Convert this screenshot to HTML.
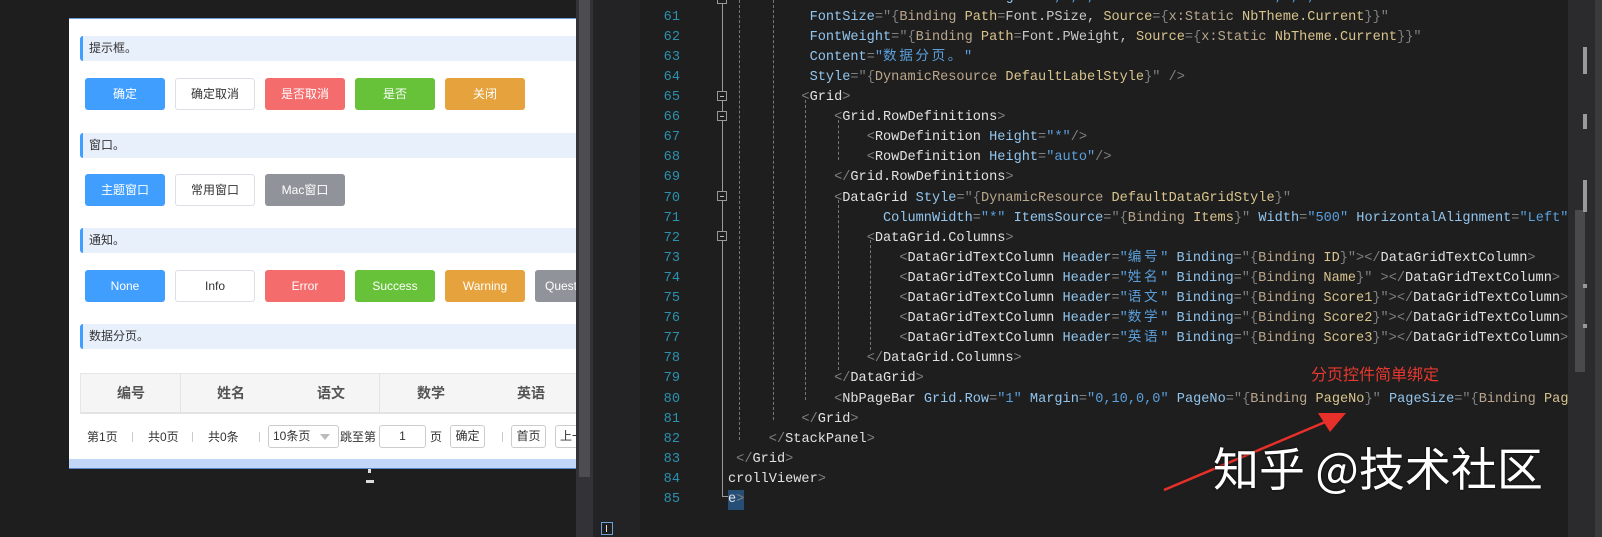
<!DOCTYPE html>
<html><head><meta charset="utf-8"><style>
*{margin:0;padding:0;box-sizing:border-box}
body{width:1602px;height:537px;overflow:hidden;background:#1e1e1e;position:relative;font-family:"Liberation Sans","Noto Sans CJK SC",sans-serif}
.abs{position:absolute}
.win{left:69px;top:18px;width:507px;height:441px;background:#fff;border-top:1px solid #6a9ad8;overflow:hidden}
.hd{position:absolute;left:11px;width:500px;height:25px;background:#e8f0fc;border-left:3px solid #409eff;border-radius:3px 0 0 3px;font-size:12px;color:#333;line-height:25px;padding-left:6px}
.bt{position:absolute;width:80px;height:32px;border-radius:3px;font-size:12px;color:#fff;text-align:center;line-height:32px;white-space:nowrap;overflow:hidden}
.w{background:#fff;border:1px solid #dcdfe6;color:#333;line-height:30px}
.th{position:absolute;top:354px;left:11px;width:500px;height:41px;background:#f5f5f5;border:1px solid #e6e6e6;border-bottom:2px solid #e3e3e3}
.th span{position:absolute;top:0;width:100px;text-align:center;line-height:39px;font-size:14px;color:#555;font-weight:bold}
.pg{position:absolute;top:407px;font-size:12px;color:#333;line-height:22px;white-space:nowrap}
.sep{position:absolute;top:413px;width:1px;height:10px;background:#ccc}
.box{position:absolute;border:1px solid #ccc;border-radius:3px;height:23px;top:406px;font-size:12px;color:#333;line-height:21px;text-align:center;white-space:nowrap;overflow:hidden}
.code{position:absolute;left:0;top:0;width:1568px;height:537px;overflow:hidden;font-family:"Liberation Mono","Noto Sans CJK SC",monospace;font-size:13.6px;white-space:pre;color:#dcdcdc;line-height:20px}
.ln{position:absolute;left:640px;width:40px;text-align:right;color:#2b91af}
.cl{position:absolute;left:728px}
.b{color:#808080}.e{color:#e2e2e2}.a{color:#92c5ee}.s{color:#5a9fdc}.k{color:#b9a68c}.p{color:#d9c48e}.v{color:#c8c8c8}
.cj{letter-spacing:2.6px}
.fold{position:absolute;left:717px;width:10px;height:10px;border:1px solid #999;background:#1e1e1e}
.fold:after{content:"";position:absolute;left:2px;top:4px;width:4px;height:1px;background:#bbb}
.dash{position:absolute;width:0;border-left:1px dashed #777}
</style></head><body>
<div class="abs win">
  <div class="hd" style="top:17px">提示框。</div>
  <div class="bt" style="left:16px;top:59px;background:#409eff">确定</div>
  <div class="bt w" style="left:106px;top:59px">确定取消</div>
  <div class="bt" style="left:196px;top:59px;background:#f56c6c">是否取消</div>
  <div class="bt" style="left:286px;top:59px;background:#67c23a">是否</div>
  <div class="bt" style="left:376px;top:59px;background:#e6a23c">关闭</div>
  <div class="hd" style="top:114px">窗口。</div>
  <div class="bt" style="left:16px;top:155px;background:#409eff">主题窗口</div>
  <div class="bt w" style="left:106px;top:155px">常用窗口</div>
  <div class="bt" style="left:196px;top:155px;background:#909399">Mac窗口</div>
  <div class="hd" style="top:209px">通知。</div>
  <div class="bt" style="left:16px;top:251px;background:#409eff">None</div>
  <div class="bt w" style="left:106px;top:251px">Info</div>
  <div class="bt" style="left:196px;top:251px;background:#f56c6c">Error</div>
  <div class="bt" style="left:286px;top:251px;background:#67c23a">Success</div>
  <div class="bt" style="left:376px;top:251px;background:#e6a23c">Warning</div>
  <div class="bt" style="left:466px;top:251px;background:#909399;text-align:left;padding-left:10px">Question</div>
  <div class="hd" style="top:305px">数据分页。</div>
  <div class="th"><span style="left:0">编号</span><span style="left:100px">姓名</span><span style="left:200px">语文</span><span style="left:300px">数学</span><span style="left:400px">英语</span>
    <i class="abs" style="left:99px;top:0;width:1px;height:39px;background:#e3e3e3"></i><i class="abs" style="left:298px;top:0;width:1px;height:39px;background:#e3e3e3"></i></div>
  <div class="pg" style="left:18px">第1页</div><div class="sep" style="left:63px"></div>
  <div class="pg" style="left:79px">共0页</div><div class="sep" style="left:123px"></div>
  <div class="pg" style="left:139px">共0条</div><div class="sep" style="left:190px"></div>
  <div class="box" style="left:199px;width:71px;text-align:left;padding-left:4px">10条页<span style="position:absolute;right:8px;top:8px;border:5px solid transparent;border-top:6px solid #bbb;border-bottom:0"></span></div>
  <div class="pg" style="left:271px">跳至第</div>
  <div class="box" style="left:310px;width:47px">1</div>
  <div class="pg" style="left:361px">页</div>
  <div class="box" style="left:381px;width:35px">确定</div>
  <div class="sep" style="left:433px"></div>
  <div class="box" style="left:442px;width:35px">首页</div>
  <div class="box" style="left:486px;width:50px;text-align:left;padding-left:4px">上一页</div>
</div>
<div class="abs" style="left:69px;top:459px;width:507px;height:10px;background:#c2d7f7;border-bottom:1px solid #5b86c4"></div>
<div class="abs" style="left:368px;top:469px;width:3px;height:4px;background:#ddd"></div>
<div class="abs" style="left:366px;top:480px;width:8px;height:3px;background:#ddd"></div>
<div class="abs" style="left:576px;top:0;width:17px;height:537px;background:#333337"></div>
<div class="abs" style="left:579px;top:0;width:11px;height:477px;background:#4d4d50"></div>
<div class="abs" style="left:593px;top:0;width:47px;height:537px;background:#232325"></div>
<div class="abs" style="left:601px;top:522px;width:12px;height:13px;border:1px solid #6aa0d8;background:#1e1e1e"><i class="abs" style="left:4px;top:2px;width:1px;height:7px;background:#ddd"></i></div>
<div class="abs" style="left:1568px;top:0;width:27px;height:537px;background:#2b2b2d"></div>
<div class="abs" style="left:1575px;top:210px;width:10px;height:162px;background:#4a4a4d"></div>
<div class="abs" style="left:1583px;top:47px;width:4px;height:27px;background:#999"></div>
<div class="abs" style="left:1583px;top:114px;width:4px;height:15px;background:#999"></div>
<div class="abs" style="left:1583px;top:180px;width:4px;height:32px;background:#999"></div>
<div class="abs" style="left:1583px;top:284px;width:4px;height:4px;background:#999"></div>
<div class="abs" style="left:1583px;top:324px;width:4px;height:4px;background:#999"></div>
<div class="abs" style="left:1595px;top:0;width:7px;height:537px;background:#3a3a3d"></div>
<div class="abs" style="left:722px;top:0;width:1px;height:497px;background:#999"></div>
<div class="abs" style="left:722px;top:496px;width:6px;height:1px;background:#999"></div>
<div class="fold" style="top:-6px"></div>
<div class="fold" style="top:91px"></div>
<div class="fold" style="top:111px"></div>
<div class="fold" style="top:191px"></div>
<div class="fold" style="top:231px"></div>
<div class="dash" style="left:739px;top:0;height:440px"></div>
<div class="dash" style="left:773px;top:0;height:420px"></div>
<div class="dash" style="left:805px;top:100px;height:300px"></div>
<div class="dash" style="left:838px;top:120px;height:40px"></div>
<div class="dash" style="left:838px;top:200px;height:170px"></div>
<div class="dash" style="left:870px;top:240px;height:110px"></div>
<div class="code">
<div class="ln" style="top:-12px">60</div><div class="cl" style="top:-12px">         <span class="b">&lt;</span><span class="e">NbLabel</span> <span class="a">Grid.Row</span><span class="b">=</span><span class="s">"1"</span> <span class="a">Margin</span><span class="b">=</span><span class="s">"0,0,0,12"</span> <span class="a">BorderThickness</span><span class="b">=</span><span class="s">"1,0,0,0"</span></div>
<div class="ln" style="top:8px">61</div><div class="cl" style="top:8px">          <span class="a">FontSize</span><span class="b">="{</span><span class="k">Binding</span> <span class="p">Path</span><span class="b">=</span><span class="v">Font.PSize,</span> <span class="p">Source</span><span class="b">={</span><span class="k">x:Static</span> <span class="p">NbTheme.Current</span><span class="b">}}"</span></div>
<div class="ln" style="top:28px">62</div><div class="cl" style="top:28px">          <span class="a">FontWeight</span><span class="b">="{</span><span class="k">Binding</span> <span class="p">Path</span><span class="b">=</span><span class="v">Font.PWeight,</span> <span class="p">Source</span><span class="b">={</span><span class="k">x:Static</span> <span class="p">NbTheme.Current</span><span class="b">}}"</span></div>
<div class="ln" style="top:48px">63</div><div class="cl" style="top:48px">          <span class="a">Content</span><span class="b">=</span><span class="s">"<span class="cj">数据分页。</span>"</span></div>
<div class="ln" style="top:68px">64</div><div class="cl" style="top:68px">          <span class="a">Style</span><span class="b">="{</span><span class="k">DynamicResource</span> <span class="p">DefaultLabelStyle</span><span class="b">}"</span> <span class="b">/&gt;</span></div>
<div class="ln" style="top:88px">65</div><div class="cl" style="top:88px">         <span class="b">&lt;</span><span class="e">Grid</span><span class="b">&gt;</span></div>
<div class="ln" style="top:108px">66</div><div class="cl" style="top:108px">             <span class="b">&lt;</span><span class="e">Grid.RowDefinitions</span><span class="b">&gt;</span></div>
<div class="ln" style="top:128px">67</div><div class="cl" style="top:128px">                 <span class="b">&lt;</span><span class="e">RowDefinition</span> <span class="a">Height</span><span class="b">=</span><span class="s">"*"</span><span class="b">/&gt;</span></div>
<div class="ln" style="top:148px">68</div><div class="cl" style="top:148px">                 <span class="b">&lt;</span><span class="e">RowDefinition</span> <span class="a">Height</span><span class="b">=</span><span class="s">"auto"</span><span class="b">/&gt;</span></div>
<div class="ln" style="top:168px">69</div><div class="cl" style="top:168px">             <span class="b">&lt;/</span><span class="e">Grid.RowDefinitions</span><span class="b">&gt;</span></div>
<div class="ln" style="top:189px">70</div><div class="cl" style="top:189px">             <span class="b">&lt;</span><span class="e">DataGrid</span> <span class="a">Style</span><span class="b">="{</span><span class="k">DynamicResource</span> <span class="p">DefaultDataGridStyle</span><span class="b">}"</span></div>
<div class="ln" style="top:209px">71</div><div class="cl" style="top:209px">                   <span class="a">ColumnWidth</span><span class="b">=</span><span class="s">"*"</span> <span class="a">ItemsSource</span><span class="b">="{</span><span class="k">Binding</span> <span class="p">Items</span><span class="b">}"</span> <span class="a">Width</span><span class="b">=</span><span class="s">"500"</span> <span class="a">HorizontalAlignment</span><span class="b">=</span><span class="s">"Left"</span></div>
<div class="ln" style="top:229px">72</div><div class="cl" style="top:229px">                 <span class="b">&lt;</span><span class="e">DataGrid.Columns</span><span class="b">&gt;</span></div>
<div class="ln" style="top:249px">73</div><div class="cl" style="top:249px">                     <span class="b">&lt;</span><span class="e">DataGridTextColumn</span> <span class="a">Header</span><span class="b">=</span><span class="s">"<span class="cj">编号</span>"</span> <span class="a">Binding</span><span class="b">="{</span><span class="k">Binding</span> <span class="p">ID</span><span class="b">}"&gt;&lt;/</span><span class="e">DataGridTextColumn</span><span class="b">&gt;</span></div>
<div class="ln" style="top:269px">74</div><div class="cl" style="top:269px">                     <span class="b">&lt;</span><span class="e">DataGridTextColumn</span> <span class="a">Header</span><span class="b">=</span><span class="s">"<span class="cj">姓名</span>"</span> <span class="a">Binding</span><span class="b">="{</span><span class="k">Binding</span> <span class="p">Name</span><span class="b">}"</span> <span class="b">&gt;&lt;/</span><span class="e">DataGridTextColumn</span><span class="b">&gt;</span></div>
<div class="ln" style="top:289px">75</div><div class="cl" style="top:289px">                     <span class="b">&lt;</span><span class="e">DataGridTextColumn</span> <span class="a">Header</span><span class="b">=</span><span class="s">"<span class="cj">语文</span>"</span> <span class="a">Binding</span><span class="b">="{</span><span class="k">Binding</span> <span class="p">Score1</span><span class="b">}"&gt;&lt;/</span><span class="e">DataGridTextColumn</span><span class="b">&gt;</span></div>
<div class="ln" style="top:309px">76</div><div class="cl" style="top:309px">                     <span class="b">&lt;</span><span class="e">DataGridTextColumn</span> <span class="a">Header</span><span class="b">=</span><span class="s">"<span class="cj">数学</span>"</span> <span class="a">Binding</span><span class="b">="{</span><span class="k">Binding</span> <span class="p">Score2</span><span class="b">}"&gt;&lt;/</span><span class="e">DataGridTextColumn</span><span class="b">&gt;</span></div>
<div class="ln" style="top:329px">77</div><div class="cl" style="top:329px">                     <span class="b">&lt;</span><span class="e">DataGridTextColumn</span> <span class="a">Header</span><span class="b">=</span><span class="s">"<span class="cj">英语</span>"</span> <span class="a">Binding</span><span class="b">="{</span><span class="k">Binding</span> <span class="p">Score3</span><span class="b">}"&gt;&lt;/</span><span class="e">DataGridTextColumn</span><span class="b">&gt;</span></div>
<div class="ln" style="top:349px">78</div><div class="cl" style="top:349px">                 <span class="b">&lt;/</span><span class="e">DataGrid.Columns</span><span class="b">&gt;</span></div>
<div class="ln" style="top:369px">79</div><div class="cl" style="top:369px">             <span class="b">&lt;/</span><span class="e">DataGrid</span><span class="b">&gt;</span></div>
<div class="ln" style="top:390px">80</div><div class="cl" style="top:390px">             <span class="b">&lt;</span><span class="e">NbPageBar</span> <span class="a">Grid.Row</span><span class="b">=</span><span class="s">"1"</span> <span class="a">Margin</span><span class="b">=</span><span class="s">"0,10,0,0"</span> <span class="a">PageNo</span><span class="b">="{</span><span class="k">Binding</span> <span class="p">PageNo</span><span class="b">}"</span> <span class="a">PageSize</span><span class="b">="{</span><span class="k">Binding</span> <span class="p">PageSize</span></div>
<div class="ln" style="top:410px">81</div><div class="cl" style="top:410px">         <span class="b">&lt;/</span><span class="e">Grid</span><span class="b">&gt;</span></div>
<div class="ln" style="top:430px">82</div><div class="cl" style="top:430px">     <span class="b">&lt;/</span><span class="e">StackPanel</span><span class="b">&gt;</span></div>
<div class="ln" style="top:450px">83</div><div class="cl" style="top:450px"> <span class="b">&lt;/</span><span class="e">Grid</span><span class="b">&gt;</span></div>
<div class="ln" style="top:470px">84</div><div class="cl" style="top:470px"><span class="e">crollViewer</span><span class="b">&gt;</span></div>
<div class="ln" style="top:490px">85</div><div class="cl" style="top:490px;background:#264f78"><span class="e">e</span><span class="b">&gt;</span></div>
</div>
<div class="abs" style="left:1311px;top:362px;font-size:16px;color:#e8382f;white-space:nowrap;font-family:'Noto Sans CJK SC',sans-serif;line-height:22px">分页控件简单绑定</div>
<svg class="abs" style="left:0;top:0" width="1602" height="537"><line x1="1164" y1="490" x2="1330" y2="420" stroke="#e8302a" stroke-width="2.5"/><polygon points="1346,413 1318,413 1330,432" fill="#e8302a"/></svg>
<div class="abs" style="left:1213px;top:437px;font-size:46px;color:#fff;white-space:nowrap;font-family:'Noto Sans CJK SC',sans-serif;line-height:60px;text-shadow:0 0 2px #000">知乎 @技术社区</div>
</body></html>
